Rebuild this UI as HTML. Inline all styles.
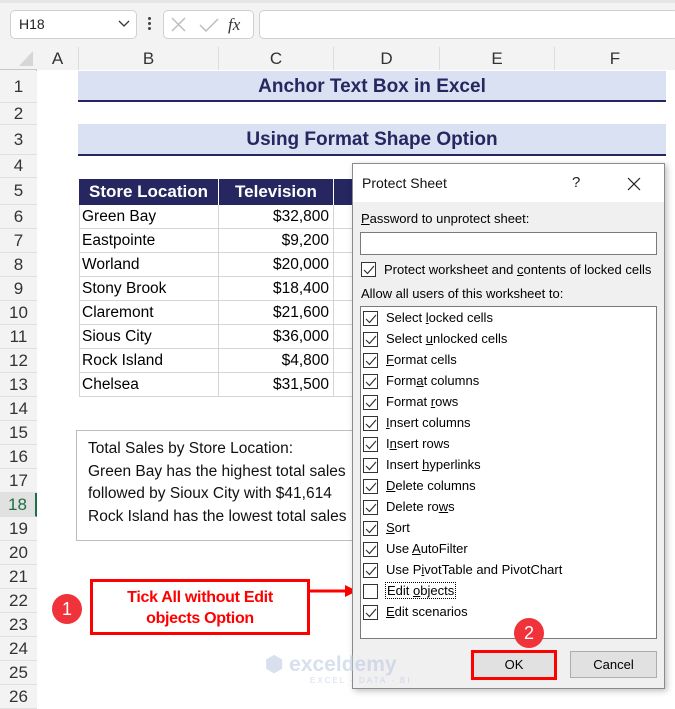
<!DOCTYPE html>
<html><head><meta charset="utf-8"><style>
*{box-sizing:border-box;margin:0;padding:0}
body{width:675px;height:700px;overflow:hidden;background:#fff;font-family:"Liberation Sans",sans-serif;position:relative}
.a{position:absolute}
.rh{position:absolute;left:0;width:37px;background:#f3f3f3;border-bottom:1px solid #e0e0e0;color:#333;font-size:17px;text-align:center;line-height:normal;display:flex;align-items:center;justify-content:center}
.ch{position:absolute;top:47px;height:23px;background:#f3f3f3;border-right:1px solid #dcdcdc;color:#333;font-size:17px;display:flex;align-items:center;justify-content:center}
.cell{position:absolute;font-size:15.5px;color:#000;display:flex;align-items:center;border-bottom:1px solid #d4d4d4;border-right:1px solid #d4d4d4}
.cb{position:absolute;left:6px;width:15px;height:15px;border:1px solid #333;background:#fff}
.cb svg{position:absolute;left:1px;top:1px}
.it{position:absolute;left:32px;font-size:13px;color:#000;white-space:nowrap}
</style></head><body>
<div class="a" style="left:0;top:0;width:675px;height:47px;background:#f3f3f3"></div>
<div class="a" style="left:0;top:0;width:675px;height:3px;background:#e6e6e6"></div>
<div class="a" style="left:10px;top:10px;width:127px;height:29px;background:#fff;border:1px solid #d0d0d0;border-radius:5px;font-size:14px;padding:5px 0 0 8px;color:#222">H18</div>
<svg class="a" style="left:118px;top:20px" width="12" height="8"><path d="M1 1 L6 6 L11 1" stroke="#333" stroke-width="1.3" fill="none"/></svg>
<div class="a" style="left:148px;top:17px;width:3px;height:3px;background:#444;border-radius:2px;box-shadow:0 5px 0 #444,0 10px 0 #444"></div>
<div class="a" style="left:163px;top:10px;width:91px;height:29px;background:#fff;border:1px solid #d0d0d0;border-radius:5px"></div>
<svg class="a" style="left:170px;top:16px" width="80" height="18"><path d="M2 2 L15 15 M15 2 L2 15" stroke="#bbb" stroke-width="1.4"/><path d="M30 9 L36 15 L48 3" stroke="#bbb" stroke-width="1.4" fill="none"/><text x="58" y="14" font-family="Liberation Serif" font-style="italic" font-size="17" fill="#333">fx</text></svg>
<div class="a" style="left:259px;top:10px;width:420px;height:29px;background:#fff;border:1px solid #d0d0d0;border-radius:5px"></div>
<div class="a" style="left:0;top:47px;width:675px;height:23px;background:#f3f3f3;border-bottom:1px solid #c8c8c8"></div>
<svg class="a" style="left:18px;top:50px" width="16" height="17"><path d="M15 1 L15 16 L1 16 Z" fill="#d6d6d6"/></svg>
<div class="ch" style="left:37px;width:42px">A</div>
<div class="ch" style="left:79px;width:140px">B</div>
<div class="ch" style="left:219px;width:115px">C</div>
<div class="ch" style="left:334px;width:106px">D</div>
<div class="ch" style="left:440px;width:115px">E</div>
<div class="ch" style="left:555px;width:120px;border:none">F</div>
<div class="a" style="left:0;top:70px;width:37px;height:630px;background:#f3f3f3;border-right:1px solid #c8c8c8"></div>
<div class="rh" style="top:71px;height:32px">1</div>
<div class="rh" style="top:103px;height:22px">2</div>
<div class="rh" style="top:125px;height:30px">3</div>
<div class="rh" style="top:155px;height:23px">4</div>
<div class="rh" style="top:178px;height:27px">5</div>
<div class="rh" style="top:205px;height:24px">6</div>
<div class="rh" style="top:229px;height:24px">7</div>
<div class="rh" style="top:253px;height:24px">8</div>
<div class="rh" style="top:277px;height:24px">9</div>
<div class="rh" style="top:301px;height:24px">10</div>
<div class="rh" style="top:325px;height:24px">11</div>
<div class="rh" style="top:349px;height:24px">12</div>
<div class="rh" style="top:373px;height:24px">13</div>
<div class="rh" style="top:397px;height:24px">14</div>
<div class="rh" style="top:421px;height:24px">15</div>
<div class="rh" style="top:445px;height:24px">16</div>
<div class="rh" style="top:469px;height:24px">17</div>
<div class="rh" style="top:493px;height:24px;background:#e1e1e1;color:#1e6e42;border-right:2px solid #1e7145">18</div>
<div class="rh" style="top:517px;height:24px">19</div>
<div class="rh" style="top:541px;height:24px">20</div>
<div class="rh" style="top:565px;height:24px">21</div>
<div class="rh" style="top:589px;height:24px">22</div>
<div class="rh" style="top:613px;height:24px">23</div>
<div class="rh" style="top:637px;height:24px">24</div>
<div class="rh" style="top:661px;height:24px">25</div>
<div class="rh" style="top:685px;height:24px">26</div>
<div class="a" style="left:78px;top:71px;width:588px;height:31px;background:#d9e1f2;border-bottom:2px solid #262660;font-weight:bold;font-size:19px;color:#262660;text-align:center;line-height:31px">Anchor Text Box in Excel</div>
<div class="a" style="left:78px;top:124px;width:588px;height:32px;background:#d9e1f2;border-bottom:2px solid #262660;font-weight:bold;font-size:19px;color:#262660;text-align:center;line-height:32px">Using Format Shape Option</div>
<div class="a" style="left:79px;top:179px;width:280px;height:26px;background:#262660"></div>
<div class="a" style="left:79px;top:179px;width:140px;height:26px;color:#fff;font-weight:bold;font-size:17px;text-align:center;line-height:26px;border-right:1px solid #fff">Store Location</div>
<div class="a" style="left:219px;top:179px;width:115px;height:26px;color:#fff;font-weight:bold;font-size:17px;text-align:center;line-height:26px;border-right:1px solid #fff">Television</div>
<div class="a" style="left:79px;top:205px;width:1px;height:192px;background:#d4d4d4"></div>
<div id="rows"></div>
<script>
var d=[["Green Bay","$32,800"],["Eastpointe","$9,200"],["Worland","$20,000"],["Stony Brook","$18,400"],["Claremont","$21,600"],["Sious City","$36,000"],["Rock Island","$4,800"],["Chelsea","$31,500"]];
var h="";d.forEach(function(r,i){var t=205+i*24;h+='<div class="cell" style="left:79px;top:'+t+'px;width:140px;height:24px;padding-left:3px">'+r[0]+'</div><div class="cell" style="left:219px;top:'+t+'px;width:115px;height:24px;justify-content:flex-end;padding-right:4px">'+r[1]+'</div><div class="cell" style="left:334px;top:'+t+'px;width:20px;height:24px;border-right:none"></div>';});
document.getElementById("rows").innerHTML=h;
</script>
<div class="a" style="left:76px;top:430px;width:300px;height:111px;border:1px solid #bdbdbd;font-size:15.5px;line-height:22.5px;padding:7px 0 0 11px;white-space:nowrap;overflow:hidden;color:#111">Total Sales by Store Location:<br>Green Bay has the highest total sales<br>followed by Sioux City with $41,614<br>Rock Island has the lowest total sales</div>
<div class="a" style="left:52px;top:594px;width:30px;height:30px;border-radius:50%;background:#f0323a;color:#fff;font-size:18px;text-align:center;line-height:30px">1</div>
<div class="a" style="left:90px;top:579px;width:220px;height:56px;border:3px solid #f00;color:#f00;font-weight:bold;font-size:16px;text-align:center;line-height:21px;padding-top:5px;letter-spacing:-0.3px">Tick All without Edit<br>objects Option</div>
<svg class="a" style="left:309px;top:583px" width="50" height="16"><path d="M0 8 L38 8" stroke="#f00" stroke-width="3"/><path d="M36 2 L48 8 L36 14 Z" fill="#f00"/></svg>
<div class="a" style="left:352px;top:163px;width:313px;height:526px;background:#f0f0f0;border:1px solid #8a8a8a;box-shadow:2px 2px 6px rgba(0,0,0,.25)">
 <div class="a" style="left:0;top:0;width:311px;height:38px;background:#fff"></div>
 <div class="a" style="left:9px;top:11px;font-size:14px;color:#111">Protect Sheet</div>
 <div class="a" style="left:219px;top:10px;font-size:15px;color:#222">?</div>
 <svg class="a" style="left:274px;top:13px" width="14" height="14"><path d="M1 1 L13 13 M13 1 L1 13" stroke="#222" stroke-width="1.2"/></svg>
 <div class="a" style="left:8px;top:47px;font-size:13px;color:#000"><u>P</u>assword to unprotect sheet:</div>
 <div class="a" style="left:7px;top:68px;width:297px;height:23px;background:#fff;border:1px solid #7a7a7a"></div>
 <div class="cb" style="left:8px;top:98px"><svg width="12" height="12"><path d="M1 6 L4.5 9.5 L11 2" stroke="#333" stroke-width="1.2" fill="none"/></svg></div>
 <div class="a" style="left:31px;top:98px;font-size:13px;white-space:nowrap">Protect worksheet and <u>c</u>ontents of locked cells</div>
 <div class="a" style="left:8px;top:122px;font-size:13px;white-space:nowrap">Allow all users of this worksheet to:</div>
 <div class="a" id="lb" style="left:7px;top:142px;width:297px;height:333px;background:#fff;border:1px solid #7a7a7a"></div>
 <div class="a" style="left:118px;top:486px;width:86px;height:30px;border:3px solid #f00;background:#e1e1e1;font-size:13px;text-align:center;line-height:24px">OK</div>
 <div class="a" style="left:217px;top:487px;width:87px;height:27px;border:1px solid #adadad;background:#e1e1e1;font-size:13px;text-align:center;line-height:25px">Cancel</div>
 <div class="a" style="left:161px;top:454px;width:30px;height:30px;border-radius:50%;background:#f0323a;color:#fff;font-size:18px;text-align:center;line-height:30px">2</div>
</div>
<div class="a" style="left:265px;top:652px;font-size:21px;font-weight:bold;color:#b9c6e0;opacity:.55;z-index:5">⬢ exceldemy</div>
<div class="a" style="left:310px;top:676px;font-size:8px;color:#b9c6e0;opacity:.6;letter-spacing:2px;z-index:5">EXCEL · DATA · BI</div>
<script>
var it=["Select <u>l</u>ocked cells","Select <u>u</u>nlocked cells","<u>F</u>ormat cells","Form<u>a</u>t columns","Format <u>r</u>ows","<u>I</u>nsert columns","I<u>n</u>sert rows","Insert <u>h</u>yperlinks","<u>D</u>elete columns","Delete ro<u>w</u>s","<u>S</u>ort","Use <u>A</u>utoFilter","Use P<u>i</u>votTable and PivotChart","Edit <u>o</u>bjects","<u>E</u>dit scenarios"];
var s="";it.forEach(function(t,i){var y=4+i*21;var ck=i!=13?'<svg width="12" height="12"><path d="M1 6 L4.5 9.5 L11 2" stroke="#333" stroke-width="1.2" fill="none"/></svg>':'';
s+='<div class="cb" style="top:'+y+'px;left:2px">'+ck+'</div><div class="it" style="left:25px;top:'+(y-1)+'px;'+(i==13?'outline:1px dotted #000;padding:0 1px;':'')+'">'+t+'</div>';});
document.getElementById("lb").innerHTML=s;
</script>
</body></html>
